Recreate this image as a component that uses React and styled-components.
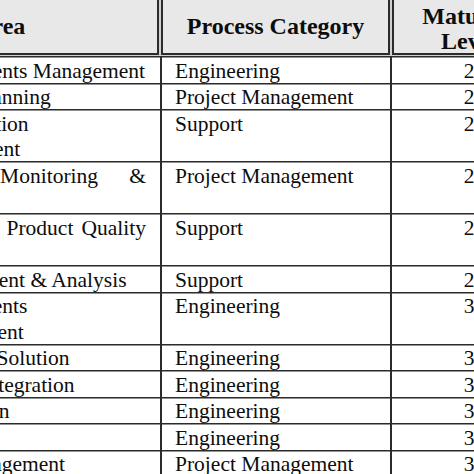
import React from "react";
import styled, { createGlobalStyle } from "styled-components";

const Global = createGlobalStyle`
  html, body { margin: 0; padding: 0; background: #fff; }
  #root { width: 474px; height: 474px; }
`;

const LINE = "#2b2b2b";

const Viewport = styled.div`
  width: 474px;
  height: 474px;
  overflow: hidden;
  background: #fff;
  font-family: "Liberation Serif", "Times New Roman", serif;
  color: #0d0d0d;
`;

const Table = styled.div`
  width: 786px;
  margin-left: -240px;
`;

const HeaderRow = styled.div`
  display: grid;
  grid-template-columns: 399px 229px 1fr;
  column-gap: 2px;
  background: #d0d0d0;
  padding-bottom: 1px;
`;

const HeadCell = styled.div`
  box-sizing: border-box;
  height: 55px;
  background: #e8e8e8;
  border: 2px solid ${LINE};
  border-top: none;
  display: flex;
  align-items: center;
  justify-content: center;
  text-align: center;
  font-weight: bold;
  font-size: 24px;
  line-height: 25px;
`;

const LevelHead = styled(HeadCell)`
  padding-top: 4px;
`;

const Body = styled.div`
  border-top: 1px solid ${LINE};
  box-shadow: inset 0 1px 0 rgba(40, 40, 40, 0.5);
  background: #fff;
`;

const Row = styled.div`
  display: grid;
  grid-template-columns: 134px 268px 230px 154px;
  border-bottom: 1px solid ${LINE};
  box-shadow: 0 1px 0 rgba(40, 40, 40, 0.5);
`;

const Cell = styled.div`
  box-sizing: border-box;
  padding: 1.5px 13px 0;
  margin-bottom: -1.5px;
  font-size: 21.5px;
  line-height: 25.5px;
  text-align: left;
  border-right: 2px solid ${LINE};
`;

const AreaCell = styled(Cell)`
  padding: 1.5px 14.1px 0 14px;
  text-align: justify;
`;

const CenterCell = styled(Cell)`
  text-align: center;
  border-right: ${(p) => (p.$last ? "none" : `2px solid ${LINE}`)};
`;

const rows = [
  ["REQM", "Requirements Management", "Engineering", 2],
  ["PP", "Project Planning", "Project Management", 2],
  ["CM", <>Configuration<br />Management</>, "Support", 2],
  ["PMC", "Project Monitoring & Control", "Project Management", 2],
  ["PPQA", "Process & Product Quality Assurance", "Support", 2],
  ["MA", "Measurement & Analysis", "Support", 2],
  ["RD", <>Requirements<br />Development</>, "Engineering", 3],
  ["TS", "Technical Solution", "Engineering", 3],
  ["PI", "Product Integration", "Engineering", 3],
  ["VER", "Verification", "Engineering", 3],
  ["VAL", "Validation", "Engineering", 3],
  ["RSKM", "Risk Management", "Project Management", 3],
];

export default function App() {
  return (
    <Viewport>
      <Global />
      <Table>
        <HeaderRow>
          <HeadCell>Process Area</HeadCell>
          <HeadCell>Process Category</HeadCell>
          <LevelHead>
            Maturity
            <br />
            Level
          </LevelHead>
        </HeaderRow>
        <Body>
          {rows.map(([abbr, area, cat, lvl]) => (
            <Row key={abbr}>
              <CenterCell>{abbr}</CenterCell>
              <AreaCell>{area}</AreaCell>
              <Cell>{cat}</Cell>
              <CenterCell $last>{lvl}</CenterCell>
            </Row>
          ))}
        </Body>
      </Table>
    </Viewport>
  );
}
